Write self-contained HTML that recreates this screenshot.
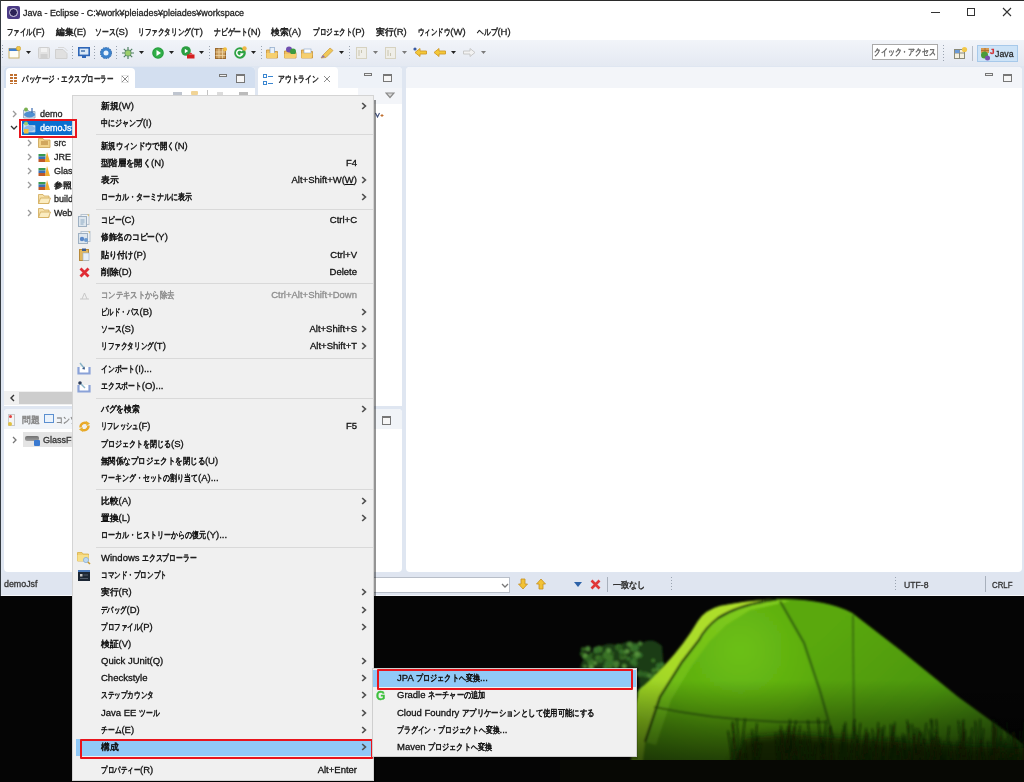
<!DOCTYPE html><html lang="ja"><head><meta charset="utf-8"><title>Eclipse</title><style>
*{margin:0;padding:0;box-sizing:border-box}
html,body{width:1024px;height:782px;overflow:hidden;background:#040404;font-family:"Liberation Sans",sans-serif;font-size:9.5px;color:#1e1e1e;line-height:1}
.a{position:absolute}
.tx{position:absolute;white-space:nowrap;line-height:12px;height:12px;-webkit-text-stroke:0.3px}
.tx b{font-weight:normal;font-size:0.92em;display:inline-block;-webkit-text-stroke:0.5px}
.tx i{font-style:normal;display:inline-block;transform-origin:0 50%}
.sep{position:absolute;left:96px;width:277px;height:1px;background:#d9d9d9}
</style></head><body><div id="root" style="position:absolute;left:0;top:0;width:1024px;height:782px;overflow:hidden;filter:blur(0.5px)">
<svg class="a" style="left:0;top:0" width="1024" height="782" viewBox="0 0 1024 782">
<defs>
<radialGradient id="gBody" cx="740" cy="650" r="150" gradientUnits="userSpaceOnUse">
<stop offset="0" stop-color="#6cc014"/><stop offset="0.5" stop-color="#5cac10"/><stop offset="1" stop-color="#44880c"/>
</radialGradient>
<linearGradient id="gRight" x1="850" y1="610" x2="990" y2="770" gradientUnits="userSpaceOnUse">
<stop offset="0" stop-color="#5aa810"/><stop offset="0.55" stop-color="#4c960c"/><stop offset="1" stop-color="#336c08"/>
</linearGradient>
<linearGradient id="gLeft" x1="740" y1="600" x2="640" y2="760" gradientUnits="userSpaceOnUse">
<stop offset="0" stop-color="#b0e02c"/><stop offset="0.5" stop-color="#a8da28"/><stop offset="1" stop-color="#84c41a"/>
</linearGradient>
<linearGradient id="gStrip" x1="760" y1="600" x2="650" y2="750" gradientUnits="userSpaceOnUse">
<stop offset="0" stop-color="#80cc1c"/><stop offset="1" stop-color="#66b414"/>
</linearGradient>
<linearGradient id="gLow" x1="0" y1="680" x2="0" y2="762" gradientUnits="userSpaceOnUse">
<stop offset="0" stop-color="#000" stop-opacity="0"/><stop offset="0.5" stop-color="#000" stop-opacity="0.32"/><stop offset="1" stop-color="#000" stop-opacity="0.6"/>
</linearGradient>
<filter id="bl" x="-5%" y="-5%" width="110%" height="110%"><feGaussianBlur stdDeviation="0.9"/></filter>
<filter id="bl2" x="-20%" y="-20%" width="140%" height="140%"><feGaussianBlur stdDeviation="1.4"/></filter>
<filter id="bl3" x="-20%" y="-20%" width="140%" height="140%"><feGaussianBlur stdDeviation="4"/></filter>
</defs>
<rect x="0" y="590" width="1024" height="192" fill="#050505"/>
<g filter="url(#bl)">
<path d="M580 668 Q584 652 598 650 Q606 640 618 646 Q628 638 640 644 Q652 636 662 646 L666 695 L640 695 L638 668 Z" fill="#1e4416" opacity="0.85"/>
<circle cx="633.1" cy="661.8" r="3.1" fill="#36702a"/>
<circle cx="635.5" cy="656.7" r="3.1" fill="#3a7228"/>
<circle cx="635.2" cy="665.6" r="2.0" fill="#2a5a1c"/>
<circle cx="653.2" cy="660.6" r="2.0" fill="#3a7228"/>
<circle cx="583.1" cy="649.2" r="2.2" fill="#2a5a1c"/>
<circle cx="595.1" cy="663.1" r="2.0" fill="#54903a"/>
<circle cx="618.5" cy="647.2" r="3.4" fill="#2e6220"/>
<circle cx="599.2" cy="649.2" r="3.4" fill="#3a7228"/>
<circle cx="605.7" cy="667.1" r="2.7" fill="#36702a"/>
<circle cx="633.3" cy="648.4" r="3.3" fill="#3a7228"/>
<circle cx="661.3" cy="688.3" r="2.3" fill="#467e30"/>
<circle cx="616.0" cy="666.5" r="2.2" fill="#467e30"/>
<circle cx="606.7" cy="658.5" r="1.8" fill="#36702a"/>
<circle cx="640.0" cy="643.6" r="2.4" fill="#467e30"/>
<circle cx="621.4" cy="651.6" r="2.6" fill="#36702a"/>
<circle cx="596.4" cy="650.1" r="3.3" fill="#36702a"/>
<circle cx="611.3" cy="653.7" r="2.7" fill="#2a5a1c"/>
<circle cx="612.0" cy="657.9" r="1.8" fill="#2e6220"/>
<circle cx="640.0" cy="673.7" r="3.3" fill="#2e6220"/>
<circle cx="644.0" cy="690.2" r="3.3" fill="#467e30"/>
<circle cx="624.0" cy="665.4" r="2.2" fill="#2a5a1c"/>
<circle cx="590.9" cy="662.0" r="3.1" fill="#467e30"/>
<circle cx="585.0" cy="666.7" r="1.9" fill="#467e30"/>
<circle cx="624.1" cy="652.7" r="2.0" fill="#467e30"/>
<circle cx="657.8" cy="669.4" r="2.3" fill="#467e30"/>
<circle cx="607.1" cy="663.2" r="2.8" fill="#36702a"/>
<circle cx="638.5" cy="693.8" r="2.1" fill="#2e6220"/>
<circle cx="588.6" cy="658.4" r="3.3" fill="#2e6220"/>
<circle cx="601.5" cy="658.3" r="3.1" fill="#2a5a1c"/>
<circle cx="635.4" cy="647.5" r="3.4" fill="#36702a"/>
<circle cx="584.7" cy="655.8" r="3.1" fill="#3a7228"/>
<circle cx="662.5" cy="670.5" r="2.0" fill="#2a5a1c"/>
<circle cx="590.7" cy="654.4" r="2.0" fill="#2a5a1c"/>
<circle cx="606.2" cy="654.9" r="3.4" fill="#3a7228"/>
<circle cx="662.0" cy="664.5" r="2.6" fill="#36702a"/>
<circle cx="608.1" cy="650.6" r="2.6" fill="#3a7228"/>
<circle cx="591.2" cy="663.7" r="2.7" fill="#3a7228"/>
<circle cx="633.4" cy="656.0" r="2.3" fill="#2e6220"/>
<circle cx="622.3" cy="656.4" r="2.7" fill="#54903a"/>
<circle cx="611.6" cy="662.9" r="3.0" fill="#36702a"/>
<circle cx="630.2" cy="644.8" r="2.3" fill="#54903a"/>
<circle cx="639.8" cy="655.2" r="2.6" fill="#36702a"/>
<circle cx="640.7" cy="691.7" r="2.3" fill="#3a7228"/>
<circle cx="629.6" cy="644.3" r="2.7" fill="#467e30"/>
<circle cx="608.7" cy="650.6" r="2.3" fill="#54903a"/>
<circle cx="635.1" cy="663.1" r="2.4" fill="#36702a"/>
<circle cx="610.3" cy="666.5" r="2.5" fill="#3a7228"/>
<circle cx="653.3" cy="677.2" r="3.4" fill="#467e30"/>
<circle cx="624.5" cy="656.7" r="2.1" fill="#467e30"/>
<circle cx="658.9" cy="665.8" r="2.9" fill="#36702a"/>
<circle cx="637.0" cy="654.0" r="2.8" fill="#54903a"/>
<circle cx="624.3" cy="666.5" r="2.3" fill="#54903a"/>
<circle cx="645.5" cy="674.4" r="3.0" fill="#2e6220"/>
<circle cx="598.0" cy="658.1" r="2.8" fill="#3a7228"/>
<circle cx="600.0" cy="660.5" r="2.8" fill="#2e6220"/>
<circle cx="662.9" cy="692.9" r="2.1" fill="#3a7228"/>
<circle cx="591.1" cy="667.2" r="2.6" fill="#54903a"/>
<circle cx="584.9" cy="655.2" r="2.4" fill="#54903a"/>
<circle cx="587.9" cy="648.9" r="2.9" fill="#467e30"/>
<circle cx="582.1" cy="653.7" r="2.2" fill="#2a5a1c"/>
<circle cx="653.0" cy="677.2" r="2.7" fill="#2e6220"/>
<circle cx="627.1" cy="651.2" r="2.3" fill="#54903a"/>
<circle cx="609.8" cy="657.9" r="3.3" fill="#3a7228"/>
<circle cx="616.4" cy="663.5" r="2.8" fill="#467e30"/>
<circle cx="620.3" cy="647.8" r="2.4" fill="#2a5a1c"/>
<circle cx="660.5" cy="692.3" r="2.8" fill="#467e30"/>
<circle cx="649.3" cy="675.7" r="2.4" fill="#467e30"/>
<circle cx="628.4" cy="658.8" r="2.0" fill="#36702a"/>
<circle cx="653.9" cy="670.5" r="2.5" fill="#3a7228"/>
<circle cx="622.5" cy="655.5" r="2.9" fill="#2a5a1c"/>
</g>
<path d="M686 597 L686 640" stroke="#1e1410" stroke-width="3" filter="url(#bl2)"/>
<g filter="url(#bl)">
<path d="M630 775 L634 712 L639 690 Q652 679 664 666 Q684 645 698 621 Q705 610 720 606 Q750 600 785 599 Q828 600 852 613 L900 650 L958 697 L1024 745 L1024 775 Z" fill="url(#gBody)"/>
<path d="M834 740 L820 691 L804 643 L780 599.5 Q828 600 852 613 L900 650 L958 697 L1024 745 L1024 772 L836 768 Z" fill="url(#gRight)"/>
<path d="M656 745 L671 700 L692 665 L709 642 L726 625 L750 610 L790 601 L777 599.5 Q740 604 718 618 Q705 628 699 640 L682 662 L660 697 L645 742 Z" fill="url(#gStrip)"/>
<path d="M630 775 L634 712 L639 690 Q652 679 664 666 Q684 645 698 621 Q705 610 720 606 Q750 600 777 599.5 Q740 604 718 618 Q705 628 699 640 L682 662 L660 697 L645 742 L641 775 Z" fill="url(#gLeft)"/>
<path d="M777 599.5 Q740 604 718 618 Q705 628 699 640 L682 662 L660 697 L645 742" stroke="#10240a" stroke-width="2.2" fill="none"/>
<path d="M780 601 L804 643 L820 691 L834 740" stroke="#2c540a" stroke-width="2" fill="none"/>
<path d="M853 615 L854 740" stroke="#2e5a0a" stroke-width="1.4" fill="none"/>
<path d="M654 707 Q735 724 826 722" stroke="#2c520a" stroke-width="1.5" fill="none"/>
</g>
<rect x="600" y="680" width="424" height="100" fill="url(#gLow)"/>
<g filter="url(#bl3)" fill="#0a1404" opacity="0.8">
<path d="M730 770 L745 738 L790 734 L840 738 L900 742 L960 746 L1024 748 L1024 782 L730 782 Z"/>
</g>
<g stroke="#0a1404" stroke-width="1.3" fill="none" filter="url(#bl)" opacity="0.75"><path d="M861.9 762 Q864.0 744.9 866.1 729.9 M865.8 762 Q866.3 745.6 866.7 731.3 M782.7 762 Q783.3 745.6 784.0 731.2 M962.7 762 Q961.7 751.2 960.8 742.5 M754.8 762 Q755.8 741.6 756.8 723.1 M740.4 762 Q742.7 739.2 745.0 718.5 M921.6 762 Q919.8 744.2 918.1 728.4 M732.4 762 Q730.2 745.4 728.0 730.7 M784.3 762 Q782.0 749.2 779.6 738.5 M865.3 762 Q867.0 746.6 868.7 733.1 M881.7 762 Q881.7 743.9 881.7 727.7 M924.1 762 Q923.0 746.3 921.9 732.7 M1023.3 762 Q1025.0 739.1 1026.7 718.1 M937.5 762 Q936.2 748.2 934.8 736.5 M813.6 762 Q814.9 751.6 816.2 743.1 M846.5 762 Q846.0 741.1 845.4 722.1 M1011.6 762 Q1009.1 741.1 1006.6 722.1 M790.1 762 Q789.9 740.2 789.8 720.4 M1018.2 762 Q1016.1 747.1 1013.9 734.3 M914.3 762 Q913.2 742.0 912.0 724.0 M753.8 762 Q756.1 748.0 758.4 736.0 M952.4 762 Q951.1 750.9 949.8 741.8 M757.9 762 Q759.4 751.7 760.9 743.4 M780.6 762 Q780.3 744.9 780.1 729.9 M784.4 762 Q782.6 742.6 780.8 725.2 M918.5 762 Q918.1 750.9 917.7 741.9 M791.0 762 Q793.4 748.9 795.7 737.7 M965.8 762 Q967.7 748.4 969.7 736.8 M790.4 762 Q792.1 747.2 793.9 734.4 M918.0 762 Q920.4 751.1 922.9 742.3 M791.1 762 Q792.5 749.0 793.8 738.0 M825.4 762 Q823.2 748.5 821.1 737.0 M754.7 762 Q753.4 744.6 752.1 729.3 M906.0 762 Q905.7 747.5 905.5 735.0 M1011.9 762 Q1012.3 746.0 1012.6 731.9 M984.5 762 Q982.8 750.0 981.0 740.1 M996.9 762 Q995.6 741.5 994.4 722.9 M784.2 762 Q786.4 742.5 788.6 725.0 M786.2 762 Q788.1 739.7 790.0 719.3 M906.6 762 Q904.7 746.8 902.7 733.6 M739.5 762 Q738.1 739.5 736.8 719.0 M936.6 762 Q938.2 749.0 939.8 738.1 M904.6 762 Q902.9 748.5 901.3 737.1 M941.2 762 Q939.9 751.6 938.5 743.1 M893.6 762 Q894.1 741.0 894.7 722.0 M810.9 762 Q809.5 740.1 808.0 720.2 M732.9 762 Q732.6 748.9 732.4 737.7 M745.9 762 Q745.2 750.1 744.6 740.2 M897.4 762 Q896.7 750.7 896.0 741.4 M991.7 762 Q992.5 739.3 993.3 718.5 M932.6 762 Q930.8 744.6 929.0 729.2 M738.4 762 Q740.4 752.3 742.5 744.5 M935.5 762 Q933.1 739.5 930.7 719.0 M916.3 762 Q917.5 746.0 918.6 732.0 M822.4 762 Q820.3 739.0 818.1 718.0 M889.6 762 Q891.6 742.6 893.6 725.1 M946.2 762 Q947.6 743.0 949.1 726.0 M998.8 762 Q999.8 747.8 1000.7 735.5 M994.6 762 Q994.2 740.7 993.8 721.5 M962.0 762 Q962.4 740.8 962.7 721.7 M913.0 762 Q913.4 747.3 913.8 734.7 M908.2 762 Q908.9 751.4 909.6 742.8 M1022.0 762 Q1023.2 740.6 1024.3 721.2 M843.0 762 Q843.4 742.6 843.8 725.2 M858.4 762 Q856.3 741.2 854.2 722.4 M950.1 762 Q950.6 752.1 951.1 744.2 M870.4 762 Q871.4 749.4 872.3 738.8 M875.2 762 Q877.3 744.2 879.4 728.4 M803.7 762 Q802.7 752.3 801.7 744.7 M928.7 762 Q927.1 749.8 925.4 739.5 M996.1 762 Q995.8 743.6 995.5 727.2 M992.0 762 Q992.8 748.1 993.6 736.2 M786.8 762 Q788.3 746.7 789.8 733.4 M998.6 762 Q998.0 740.6 997.5 721.2 M900.6 762 Q898.8 748.2 897.0 736.5 M875.0 762 Q876.7 741.2 878.4 722.4 M938.5 762 Q937.4 739.7 936.3 719.3 M778.1 762 Q776.9 746.4 775.8 732.8 M791.4 762 Q792.0 746.9 792.6 733.8 M874.2 762 Q875.9 748.2 877.6 736.5 M1018.7 762 Q1016.6 746.4 1014.4 732.8 M737.3 762 Q735.0 740.7 732.7 721.4 M937.8 762 Q936.8 744.8 935.8 729.6 M962.3 762 Q960.5 752.2 958.6 744.5 M862.6 762 Q864.3 752.2 865.9 744.3 M798.3 762 Q796.0 750.6 793.7 741.2 M914.2 762 Q914.9 746.5 915.5 732.9 M921.9 762 Q924.2 741.6 926.5 723.2 M930.6 762 Q930.5 749.8 930.4 739.6 M780.9 762 Q780.8 752.4 780.6 744.7 M939.4 762 Q938.3 750.1 937.1 740.2 M830.3 762 Q830.4 743.1 830.5 726.2 M909.9 762 Q909.3 742.3 908.8 724.6 M962.4 762 Q960.3 740.3 958.3 720.5 M1004.1 762 Q1002.2 742.7 1000.3 725.5 M862.2 762 Q864.3 744.1 866.3 728.1 M839.5 762 Q841.4 744.8 843.3 729.6 M963.8 762 Q963.7 739.8 963.5 719.5 M920.8 762 Q921.9 749.7 923.0 739.5 M970.2 762 Q971.3 743.8 972.4 727.7 M791.1 762 Q793.5 740.4 795.9 720.7 M1017.3 762 Q1018.8 745.3 1020.2 730.5 M822.8 762 Q824.6 740.2 826.4 720.4 M831.2 762 Q830.9 751.4 830.6 742.8 M890.9 762 Q890.8 742.1 890.8 724.3 M736.4 762 Q734.2 741.6 732.1 723.2 M964.8 762 Q963.9 750.2 963.1 740.3 M961.2 762 Q959.5 750.6 957.7 741.2 M880.9 762 Q882.6 742.7 884.3 725.5 M932.1 762 Q932.0 739.7 932.0 719.5 M1008.9 762 Q1007.6 751.3 1006.2 742.7 M883.9 762 Q885.0 748.6 886.2 737.2 M917.1 762 Q918.8 745.4 920.5 730.9 M893.8 762 Q893.2 748.3 892.6 736.6 M978.2 762 Q976.7 740.3 975.3 720.7 M979.8 762 Q979.9 739.4 980.1 718.9 M897.6 762 Q897.8 749.8 898.0 739.6 M876.9 762 Q874.6 744.3 872.2 728.7 M1014.9 762 Q1014.4 745.5 1013.9 731.1 M965.1 762 Q965.1 744.9 965.0 729.8 M932.5 762 Q932.7 751.6 932.9 743.2 M850.5 762 Q852.6 739.6 854.7 719.2 M807.7 762 Q805.8 746.1 804.0 732.2 M856.4 762 Q858.4 741.5 860.4 723.0 M869.1 762 Q867.5 748.2 866.0 736.4 M910.9 762 Q909.0 740.0 907.2 720.0 M958.7 762 Q957.1 752.2 955.6 744.4 M795.3 762 Q794.4 743.2 793.5 726.5 M833.2 762 Q831.2 744.1 829.2 728.3 M944.3 762 Q944.4 750.8 944.4 741.7 M802.2 762 Q802.3 749.8 802.5 739.7 M857.3 762 Q856.9 747.4 856.4 734.9 M884.7 762 Q883.2 750.3 881.7 740.7 M914.9 762 Q915.0 743.9 915.2 727.8 M980.0 762 Q981.8 744.2 983.5 728.5 M796.9 762 Q798.4 742.5 800.0 725.0 M995.2 762 Q994.3 748.2 993.3 736.5 M1001.1 762 Q1003.6 749.6 1006.1 739.1 M990.7 762 Q989.4 750.7 988.1 741.4 M943.1 762 Q941.1 749.0 939.0 738.0"/></g>
<rect x="560" y="760" width="464" height="22" fill="#070804"/>
</svg>

<div class="a" style="left:0px;top:0px;width:1024px;height:596px;background:#dfe6f1"></div>
<div class="a" style="left:0px;top:0px;width:1024px;height:40px;background:#fff"></div>
<div class="a" style="left:0px;top:0px;width:1024px;height:1px;background:#2b2b2b"></div>
<div class="a" style="left:0px;top:0px;width:1.2px;height:596px;background:#343a40"></div>
<div class="a" style="left:1px;top:40px;width:1023px;height:26px;background:linear-gradient(#f1f4f9,#e4e9f2)"></div>
<div class="a" style="left:7px;top:6px;width:13px;height:13px;background:#4b3b86;border-radius:2px"></div>
<div class="a" style="left:9px;top:8px;width:9px;height:9px;border-radius:50%;background:#2c2358;border:1.5px solid #d9d4ea"></div>
<div class="tx" style="left:23px;top:7.00px;color:#222;font-size:9.5px;transform:scaleX(0.943);transform-origin:0 50%;">Java - Eclipse - C:¥work¥pleiades¥pleiades¥workspace</div>
<div class="a" style="left:931px;top:12px;width:9px;height:1px;background:#333"></div>
<div class="a" style="left:967px;top:8px;width:8px;height:8px;border:1px solid #333"></div>
<svg class="a" style="left:1002px;top:7px" width="10" height="10"><path d="M1 1L9 9M9 1L1 9" stroke="#333" stroke-width="1.1"/></svg>
<div class="tx" style="left:7px;top:26.00px;color:#222;font-size:9.5px;"><b style="width:25.50px"><i style="transform:scaleX(0.708)">ファイル</i></b>(F)</div>
<div class="tx" style="left:56px;top:26.00px;color:#222;font-size:9.5px;"><b style="width:17.60px"><i style="transform:scaleX(0.978)">編集</i></b>(E)</div>
<div class="tx" style="left:95px;top:26.00px;color:#222;font-size:9.5px;"><b style="width:20.40px"><i style="transform:scaleX(0.756)">ソース</i></b>(S)</div>
<div class="tx" style="left:138px;top:26.00px;color:#222;font-size:9.5px;"><b style="width:52.70px"><i style="transform:scaleX(0.732)">リファクタリング</i></b>(T)</div>
<div class="tx" style="left:213.5px;top:26.00px;color:#222;font-size:9.5px;"><b style="width:34.00px"><i style="transform:scaleX(0.756)">ナビゲート</i></b>(N)</div>
<div class="tx" style="left:271px;top:26.00px;color:#222;font-size:9.5px;"><b style="width:17.60px"><i style="transform:scaleX(0.978)">検索</i></b>(A)</div>
<div class="tx" style="left:313px;top:26.00px;color:#222;font-size:9.5px;"><b style="width:39.10px"><i style="transform:scaleX(0.724)">プロジェクト</i></b>(P)</div>
<div class="tx" style="left:376px;top:26.00px;color:#222;font-size:9.5px;"><b style="width:17.60px"><i style="transform:scaleX(0.978)">実行</i></b>(R)</div>
<div class="tx" style="left:418px;top:26.00px;color:#222;font-size:9.5px;"><b style="width:32.30px"><i style="transform:scaleX(0.718)">ウィンドウ</i></b>(W)</div>
<div class="tx" style="left:477px;top:26.00px;color:#222;font-size:9.5px;"><b style="width:20.40px"><i style="transform:scaleX(0.756)">ヘルプ</i></b>(H)</div>
<div class="a" style="left:2px;top:45px;width:1px;height:15px;background:repeating-linear-gradient(#9aa3b0 0 1px,transparent 1px 3px)"></div>
<svg class="a" style="left:8px;top:46px" width="13" height="13" viewBox="0 0 13 13"><rect x="1" y="2.5" width="10" height="9.5" fill="#fdfdf6" stroke="#c8b06a" stroke-width="1"/><rect x="1" y="2.5" width="10" height="2.5" fill="#3f7fd0"/><circle cx="10.5" cy="2.5" r="2.2" fill="#f4c848" stroke="#c89a30" stroke-width="0.6"/></svg>
<svg class="a" style="left:26.0px;top:51px" width="5" height="3" viewBox="0 0 5 3"><path d="M0 0H5L2.5 3Z" fill="#222"/></svg>
<svg class="a" style="left:38px;top:47px" width="12" height="12" viewBox="0 0 12 12"><rect x="0.5" y="0.5" width="11" height="11" rx="1" fill="#e2e2e2" stroke="#cfcfcf"/><rect x="3" y="1" width="6" height="4" fill="#f2f2f2"/><rect x="2.5" y="7" width="7" height="4" fill="#d0d0d0"/></svg>
<svg class="a" style="left:55px;top:47px" width="13" height="12" viewBox="0 0 13 12"><path d="M0.5 2.5H8L12 6.5V11.5H0.5Z" fill="#e0e0e0" stroke="#d0d0d0"/><path d="M3 0.5H9L12.5 4" fill="none" stroke="#d8d8d8"/></svg>
<div class="a" style="left:72px;top:46px;width:1px;height:14px;background:repeating-linear-gradient(#9aa3b0 0 1px,transparent 1px 3px)"></div>
<svg class="a" style="left:78px;top:47px" width="12" height="11" viewBox="0 0 12 11"><rect x="0.8" y="0.8" width="10.4" height="7.6" fill="#dbe8f6" stroke="#2e66b8" stroke-width="1.6"/><rect x="3" y="3" width="4" height="2" fill="#6a90c0"/><rect x="4" y="9" width="4" height="2" fill="#2e66b8"/></svg>
<div class="a" style="left:94px;top:46px;width:1px;height:14px;background:repeating-linear-gradient(#9aa3b0 0 1px,transparent 1px 3px)"></div>
<svg class="a" style="left:100px;top:47px" width="12" height="12" viewBox="0 0 12 12"><circle cx="6" cy="6" r="5.5" fill="#3b82cc"/><circle cx="6" cy="6" r="5.6" fill="none" stroke="#2a64a8" stroke-width="1" stroke-dasharray="1.5 1"/><circle cx="6" cy="6" r="2.5" fill="#e8f2fc"/></svg>
<div class="a" style="left:116px;top:46px;width:1px;height:14px;background:repeating-linear-gradient(#9aa3b0 0 1px,transparent 1px 3px)"></div>
<svg class="a" style="left:122px;top:47px" width="12" height="12" viewBox="0 0 12 12"><circle cx="6" cy="6" r="3.5" fill="#7aa87a"/><path d="M6 0V12M0 6H12M1.8 1.8L10.2 10.2M10.2 1.8L1.8 10.2" stroke="#4f8060" stroke-width="1.2"/><circle cx="6" cy="6" r="2.6" fill="#9ccf6a"/></svg>
<svg class="a" style="left:139.0px;top:51px" width="5" height="3" viewBox="0 0 5 3"><path d="M0 0H5L2.5 3Z" fill="#222"/></svg>
<svg class="a" style="left:152px;top:47px" width="12" height="12" viewBox="0 0 12 12"><circle cx="6" cy="6" r="5.8" fill="#239a3a"/><circle cx="6" cy="6" r="4.8" fill="#30ae48"/><path d="M4.5 3L9 6L4.5 9Z" fill="#fff"/></svg>
<svg class="a" style="left:169.0px;top:51px" width="5" height="3" viewBox="0 0 5 3"><path d="M0 0H5L2.5 3Z" fill="#222"/></svg>
<svg class="a" style="left:181px;top:46px" width="14" height="13" viewBox="0 0 14 13"><circle cx="5" cy="5" r="4.8" fill="#2a9e40"/><path d="M3.8 2.8L7.2 5L3.8 7.2Z" fill="#fff"/><path d="M6 8.5H13.5V12.5H6Z" fill="#d42020"/><path d="M7.5 8.5L9.8 6.5L12 8.5" fill="#e03030"/></svg>
<svg class="a" style="left:199.0px;top:51px" width="5" height="3" viewBox="0 0 5 3"><path d="M0 0H5L2.5 3Z" fill="#222"/></svg>
<div class="a" style="left:209px;top:46px;width:1px;height:14px;background:repeating-linear-gradient(#9aa3b0 0 1px,transparent 1px 3px)"></div>
<svg class="a" style="left:215px;top:47px" width="12" height="12" viewBox="0 0 12 12"><rect x="0.5" y="1.5" width="10" height="10" fill="#c89a5a" stroke="#9a6a30"/><path d="M0.5 5H10.5M0.5 8.5H10.5M4 1.5V11.5M7.5 1.5V11.5" stroke="#f0d8a8" stroke-width="0.8"/><circle cx="10" cy="2.2" r="2" fill="#f2c040"/></svg>
<svg class="a" style="left:234px;top:46px" width="13" height="13" viewBox="0 0 13 13"><circle cx="6" cy="7" r="5.8" fill="#2ea244"/><path d="M8.2 5.2A3 3 0 1 0 8.5 8H6.3" stroke="#fff" stroke-width="1.5" fill="none"/><circle cx="10.5" cy="2.5" r="2.2" fill="#f0b848"/></svg>
<svg class="a" style="left:251.0px;top:51px" width="5" height="3" viewBox="0 0 5 3"><path d="M0 0H5L2.5 3Z" fill="#222"/></svg>
<div class="a" style="left:261px;top:46px;width:1px;height:14px;background:repeating-linear-gradient(#9aa3b0 0 1px,transparent 1px 3px)"></div>
<svg class="a" style="left:266px;top:47px" width="12" height="12" viewBox="0 0 12 12"><path d="M0.5 3H4.5L5.5 4.5H11.5V11H0.5Z" fill="#f0c060" stroke="#c89030" stroke-width="0.8"/><rect x="4" y="0.5" width="4.5" height="6" fill="#e8f0fa" stroke="#7a9ac0" stroke-width="0.6"/><path d="M0.5 6H11.5L10.5 11H0.5Z" fill="#f6cf6e"/></svg>
<svg class="a" style="left:284px;top:46px" width="13" height="13" viewBox="0 0 13 13"><path d="M0.5 5H4.5L5.5 6.5H12V12H0.5Z" fill="#f0c060" stroke="#c89030" stroke-width="0.8"/><circle cx="5" cy="3.5" r="3" fill="#7050b0"/><circle cx="9" cy="5.5" r="3" fill="#3a9a40"/><path d="M0.5 8H12.5L11.5 12H0.5Z" fill="#f6cf6e"/></svg>
<svg class="a" style="left:301px;top:47px" width="12" height="12" viewBox="0 0 12 12"><path d="M0.5 3H4.5L5.5 4.5H11.5V11H0.5Z" fill="#f0c060" stroke="#c89030" stroke-width="0.8"/><rect x="3" y="2" width="7" height="4" fill="#fff" stroke="#8aa6c8" stroke-width="0.6"/><path d="M0.5 6.5H11.5L10.5 11H0.5Z" fill="#f6cf6e"/></svg>
<svg class="a" style="left:320px;top:47px" width="14" height="12" viewBox="0 0 14 12"><path d="M1 11L3 8L10 1L13 3.5L6 10.5Z" fill="#f0c858" stroke="#c89a40" stroke-width="0.7"/><path d="M1 11L3 8L5 10Z" fill="#8a70b0"/></svg>
<svg class="a" style="left:339.0px;top:51px" width="5" height="3" viewBox="0 0 5 3"><path d="M0 0H5L2.5 3Z" fill="#222"/></svg>
<div class="a" style="left:349px;top:46px;width:1px;height:14px;background:repeating-linear-gradient(#9aa3b0 0 1px,transparent 1px 3px)"></div>
<svg class="a" style="left:356px;top:47px" width="11" height="12" viewBox="0 0 11 12"><rect x="0.5" y="0.5" width="10" height="11" fill="#efeee8" stroke="#d6d2c0"/><path d="M3 3V9M5.5 3V6" stroke="#c8c4b0" stroke-width="1"/></svg>
<svg class="a" style="left:373.0px;top:51px" width="5" height="3" viewBox="0 0 5 3"><path d="M0 0H5L2.5 3Z" fill="#7a7a7a"/></svg>
<svg class="a" style="left:385px;top:47px" width="11" height="12" viewBox="0 0 11 12"><rect x="0.5" y="0.5" width="10" height="11" fill="#efeee8" stroke="#d6d2c0"/><path d="M3 3V9M5.5 6V9" stroke="#c8c4b0" stroke-width="1"/></svg>
<svg class="a" style="left:402.0px;top:51px" width="5" height="3" viewBox="0 0 5 3"><path d="M0 0H5L2.5 3Z" fill="#7a7a7a"/></svg>
<svg class="a" style="left:413px;top:47px" width="15" height="11" viewBox="0 0 15 11"><path d="M2 5.5L7 1.5V4H13.5V7H7V9.5Z" fill="#f4c838" stroke="#d09a28" stroke-width="0.9"/><circle cx="2" cy="2" r="1.6" fill="#3a5aa0"/></svg>
<svg class="a" style="left:433px;top:47px" width="13" height="11" viewBox="0 0 13 11"><path d="M1 5.5L6 1.5V4H12.5V7H6V9.5Z" fill="#f4c838" stroke="#d09a28" stroke-width="0.9"/></svg>
<svg class="a" style="left:451.0px;top:51px" width="5" height="3" viewBox="0 0 5 3"><path d="M0 0H5L2.5 3Z" fill="#222"/></svg>
<svg class="a" style="left:463px;top:47px" width="13" height="11" viewBox="0 0 13 11"><path d="M12 5.5L7 1.5V4H0.5V7H7V9.5Z" fill="#f2f2f2" stroke="#c4c4c4" stroke-width="0.9"/></svg>
<svg class="a" style="left:481.0px;top:51px" width="5" height="3" viewBox="0 0 5 3"><path d="M0 0H5L2.5 3Z" fill="#7a7a7a"/></svg>
<div class="a" style="left:872px;top:44px;width:66px;height:16px;background:#fff;border:1px solid #a9a9a9"></div>
<div class="tx" style="left:874px;top:46.00px;color:#6a6a6a;font-size:9.5px;"><b style="width:61.78px"><i style="transform:scaleX(0.763)">クイック・アクセス</i></b></div>
<div class="a" style="left:943px;top:45px;width:1px;height:16px;background:repeating-linear-gradient(#9aa3b0 0 1px,transparent 1px 3px)"></div>
<svg class="a" style="left:954px;top:46px" width="14" height="14" viewBox="0 0 14 14"><rect x="0.5" y="3.5" width="10" height="9" fill="#f4f0e0" stroke="#8a8a78"/><path d="M0.5 7H10.5M5.5 3.5V12.5" stroke="#8a8a78"/><rect x="1" y="4" width="4.5" height="3" fill="#6a9ad8"/><circle cx="10.5" cy="3.5" r="2.6" fill="#f2c84a"/></svg>
<div class="a" style="left:972px;top:46px;width:1px;height:15px;background:#b8bec8"></div>
<div class="a" style="left:977px;top:45px;width:41px;height:17px;background:#cde3f7;border:1px solid #a7c9ea"></div>
<svg class="a" style="left:980px;top:47px" width="14" height="14" viewBox="0 0 14 14"><rect x="1" y="1" width="8" height="5" fill="#d89a50"/><path d="M1 3.5H9M5 1V6" stroke="#a86a28" stroke-width="0.8"/><circle cx="4.5" cy="8" r="3.5" fill="#4a9a3a"/><circle cx="7.5" cy="11" r="2.5" fill="#7a4fb0"/></svg>
<div class="tx" style="left:990px;top:46.00px;color:#d02828;font-size:8px;font-weight:bold;">J</div>
<div class="tx" style="left:995px;top:48.00px;color:#2a2a2a;font-size:9px;transform:scaleX(0.973);transform-origin:0 50%;">Java</div>
<div class="a" style="left:4px;top:67px;width:251px;height:339px;background:#fff;border-radius:4px 4px 0 0"></div>
<div class="a" style="left:4px;top:67px;width:251px;height:21px;background:#d3dff0;border-radius:4px 4px 0 0"></div>
<div class="a" style="left:6px;top:68px;width:129px;height:20px;background:#fff;border-radius:4px 4px 0 0"></div>
<div class="a" style="left:10px;top:74px;width:3px;height:10px;background:repeating-linear-gradient(#c07030 0 2px,transparent 2px 3px)"></div>
<div class="a" style="left:14px;top:74px;width:3px;height:10px;background:repeating-linear-gradient(#c07030 0 2px,transparent 2px 3px)"></div>
<div class="tx" style="left:22px;top:73.00px;color:#222;font-size:9.5px;"><b style="width:91.20px"><i style="transform:scaleX(0.724)">パッケージ・エクスプローラー</i></b></div>
<svg class="a" style="left:121px;top:75px" width="8" height="8"><path d="M1 1L7 7M7 1L1 7" stroke="#8a8a8a" stroke-width="1"/><rect x="0.5" y="0.5" width="7" height="7" fill="none" stroke="#aaa" stroke-width="0.6" stroke-dasharray="1 1"/></svg>
<div class="a" style="left:219px;top:74px;width:8px;height:3px;border:1px solid #777;background:#eee"></div>
<div class="a" style="left:235.5px;top:74px;width:9px;height:8.5px;border:1px solid #777;border-top:2px solid #777;background:#f6f6f6"></div>
<svg class="a" style="left:12px;top:110px" width="6" height="8"><path d="M1 1L4 4L1 7" stroke="#999" stroke-width="1.3" fill="none"/></svg>
<svg class="a" style="left:23px;top:107px" width="13" height="12" viewBox="0 0 13 12"><path d="M0.5 3H5L6 4.5H12V11H0.5Z" fill="#dfe6ee" stroke="#8aa0b8" stroke-width="0.8"/><ellipse cx="6.5" cy="7.5" rx="5.5" ry="3" fill="#4f8fd0"/><circle cx="3" cy="2.5" r="2" fill="#7ab050"/><path d="M9 1V6" stroke="#3a6ab0" stroke-width="1.2"/></svg>
<div class="tx" style="left:40px;top:108.00px;color:#222;font-size:9px;">demo</div>
<svg class="a" style="left:10px;top:125px" width="8" height="6"><path d="M1 1L4 4L7 1" stroke="#333" stroke-width="1.3" fill="none"/></svg>
<div class="a" style="left:22px;top:121px;width:51px;height:14px;background:#0a6fd0"></div>
<svg class="a" style="left:23px;top:121px" width="13" height="13" viewBox="0 0 13 13"><path d="M0.5 3H5L6 4.5H12V11H0.5Z" fill="#cfe0f2" stroke="#a8c4e0" stroke-width="0.8"/><ellipse cx="6.5" cy="7.5" rx="5.5" ry="3" fill="#8ab8e8"/><circle cx="3" cy="2.5" r="2" fill="#9ad070"/><rect x="1" y="8" width="4.5" height="4.5" fill="#f0c040"/></svg>
<div class="tx" style="left:40px;top:122.00px;color:#fff;font-size:9px;">demoJsf</div>
<svg class="a" style="left:27px;top:139px" width="6" height="8"><path d="M1 1L4 4L1 7" stroke="#999" stroke-width="1.3" fill="none"/></svg>
<svg class="a" style="left:38px;top:137px" width="13" height="11" viewBox="0 0 13 11"><path d="M0.5 1.5H5L6 3H12V10.5H0.5Z" fill="#f2d38a" stroke="#c8a050" stroke-width="0.8"/><path d="M3 5H10M3 7H10" stroke="#b07a30" stroke-width="1"/></svg>
<div class="tx" style="left:54px;top:137.00px;color:#222;font-size:9px;">src</div>
<svg class="a" style="left:27px;top:153px" width="6" height="8"><path d="M1 1L4 4L1 7" stroke="#999" stroke-width="1.3" fill="none"/></svg>
<svg class="a" style="left:38px;top:151px" width="13" height="12" viewBox="0 0 13 12"><rect x="0.5" y="3" width="7" height="2.5" fill="#3a9a50"/><rect x="0.5" y="5.5" width="7" height="2.5" fill="#3a70b8"/><rect x="0.5" y="8" width="7" height="3" fill="#c05a28"/><path d="M7 11L9 1L12 11Z" fill="#f0b030"/></svg>
<div class="tx" style="left:54px;top:151.00px;color:#222;font-size:9px;">JRE <b style="width:6.80px"><i style="transform:scaleX(0.850)">シ</i></b></div>
<svg class="a" style="left:27px;top:167px" width="6" height="8"><path d="M1 1L4 4L1 7" stroke="#999" stroke-width="1.3" fill="none"/></svg>
<svg class="a" style="left:38px;top:165px" width="13" height="12" viewBox="0 0 13 12"><rect x="0.5" y="3" width="7" height="2.5" fill="#3a9a50"/><rect x="0.5" y="5.5" width="7" height="2.5" fill="#3a70b8"/><rect x="0.5" y="8" width="7" height="3" fill="#c05a28"/><path d="M7 11L9 1L12 11Z" fill="#f0b030"/></svg>
<div class="tx" style="left:54px;top:165.00px;color:#222;font-size:9px;">GlassFish</div>
<svg class="a" style="left:27px;top:181px" width="6" height="8"><path d="M1 1L4 4L1 7" stroke="#999" stroke-width="1.3" fill="none"/></svg>
<svg class="a" style="left:38px;top:179px" width="13" height="12" viewBox="0 0 13 12"><rect x="0.5" y="3" width="7" height="2.5" fill="#3a9a50"/><rect x="0.5" y="5.5" width="7" height="2.5" fill="#3a70b8"/><rect x="0.5" y="8" width="7" height="3" fill="#c05a28"/><path d="M7 11L9 1L12 11Z" fill="#f0b030"/></svg>
<div class="tx" style="left:54px;top:179.00px;color:#222;font-size:9px;"><b style="width:17.60px"><i style="transform:scaleX(1.100)">参照</i></b></div>
<svg class="a" style="left:38px;top:193px" width="13" height="11" viewBox="0 0 13 11"><path d="M0.5 1.5H5L6 3H11V10.5H0.5Z" fill="#f6e0a8" stroke="#d0aa58" stroke-width="0.8"/><path d="M2.5 5H12.5L10.5 10.5H0.5Z" fill="#fbecc0" stroke="#d0aa58" stroke-width="0.8"/></svg>
<div class="tx" style="left:54px;top:193.00px;color:#222;font-size:9px;">build</div>
<svg class="a" style="left:27px;top:209px" width="6" height="8"><path d="M1 1L4 4L1 7" stroke="#999" stroke-width="1.3" fill="none"/></svg>
<svg class="a" style="left:38px;top:207px" width="13" height="11" viewBox="0 0 13 11"><path d="M0.5 1.5H5L6 3H11V10.5H0.5Z" fill="#f6e0a8" stroke="#d0aa58" stroke-width="0.8"/><path d="M2.5 5H12.5L10.5 10.5H0.5Z" fill="#fbecc0" stroke="#d0aa58" stroke-width="0.8"/></svg>
<div class="tx" style="left:54px;top:207.00px;color:#222;font-size:9px;">WebContent</div>
<div class="a" style="left:173px;top:92px;width:9px;height:3px;background:#8a96a8;opacity:.55"></div>
<div class="a" style="left:191px;top:91px;width:7px;height:4px;background:#e8b850;border-radius:1px;opacity:.6"></div>
<div class="a" style="left:207px;top:90px;width:1px;height:5px;background:#888;opacity:.5"></div>
<div class="a" style="left:217px;top:92px;width:6px;height:3px;background:#b8b8b8;opacity:.5"></div>
<div class="a" style="left:239px;top:92px;width:9px;height:3px;background:#777;opacity:.5"></div>
<div class="a" style="left:4px;top:391px;width:251px;height:14px;background:#f0f0f0"></div>
<div class="a" style="left:19px;top:392px;width:236px;height:12px;background:#cdcdcd"></div>
<svg class="a" style="left:9px;top:394px" width="6" height="8"><path d="M5 1L2 4L5 7" stroke="#333" stroke-width="1.4" fill="none"/></svg>
<div class="a" style="left:258px;top:67px;width:144px;height:339px;background:#fff;border-radius:4px 4px 0 0"></div>
<div class="a" style="left:258px;top:67px;width:144px;height:21px;background:#eef2f8;border-radius:4px 4px 0 0"></div>
<div class="a" style="left:258px;top:67px;width:80px;height:21px;background:#fff;border-radius:4px 4px 0 0"></div>
<div class="a" style="left:358px;top:88px;width:44px;height:16px;background:#f3f5f9"></div>
<div class="a" style="left:263px;top:74px;width:4px;height:4px;border:1.2px solid #3b86d0"></div>
<div class="a" style="left:263px;top:81px;width:4px;height:4px;border:1.2px solid #3b86d0"></div>
<div class="a" style="left:268px;top:76px;width:5px;height:1px;background:#3b86d0"></div>
<div class="a" style="left:268px;top:83px;width:5px;height:1px;background:#3b86d0"></div>
<div class="tx" style="left:278px;top:73.00px;color:#222;font-size:9.5px;"><b style="width:40.80px"><i style="transform:scaleX(0.756)">アウトライン</i></b></div>
<svg class="a" style="left:323px;top:75px" width="8" height="8"><path d="M1 1L7 7M7 1L1 7" stroke="#8a8a8a" stroke-width="1"/></svg>
<div class="a" style="left:364px;top:73px;width:8px;height:3px;border:1px solid #777;background:#eee"></div>
<div class="a" style="left:383px;top:73.5px;width:9px;height:8.5px;border:1px solid #777;border-top:2px solid #777;background:#f6f6f6"></div>
<svg class="a" style="left:375px;top:112px" width="9" height="6"><path d="M0.5 1L2.5 5L4.5 1" stroke="#3a4a78" stroke-width="1.1" fill="none"/><path d="M5.5 3.5H8.5M7 2V5" stroke="#c07030" stroke-width="1"/></svg>
<svg class="a" style="left:385px;top:92px" width="10" height="7"><path d="M1 1H9L5 5.5Z" fill="#d8d8d8" stroke="#8a8a8a" stroke-width="1.2"/></svg>
<div class="a" style="left:4px;top:409px;width:398px;height:163px;background:#fff;border-radius:4px"></div>
<div class="a" style="left:4px;top:409px;width:398px;height:20px;background:#f1f4f8;border-radius:4px 4px 0 0"></div>
<div class="a" style="left:8px;top:414px;width:7px;height:12px;background:#f4f4f4;border:1px solid #c8c8c8"></div>
<div class="a" style="left:9px;top:415px;width:3px;height:3px;background:#e04040;border-radius:50%"></div>
<div class="a" style="left:8px;top:422px;width:4px;height:4px;background:#e0c040;border-radius:50%"></div>
<div class="tx" style="left:22px;top:414.00px;color:#888;font-size:9.5px;"><b style="width:17.60px"><i style="transform:scaleX(0.978)">問題</i></b></div>
<div class="a" style="left:44px;top:414px;width:10px;height:9px;border:1.5px solid #5b8fd0;background:#eaf2fb"></div>
<div class="tx" style="left:56px;top:414.00px;color:#888;font-size:9.5px;"><b style="width:34.00px"><i style="transform:scaleX(0.756)">コンソール</i></b></div>
<div class="a" style="left:382px;top:416px;width:9px;height:8.5px;border:1px solid #777;border-top:2px solid #777;background:#f6f6f6"></div>
<svg class="a" style="left:12px;top:436px" width="6" height="8"><path d="M1 1L4 4L1 7" stroke="#777" stroke-width="1.3" fill="none"/></svg>
<div class="a" style="left:23px;top:432px;width:52px;height:15px;background:#e4e4e4"></div>
<div class="a" style="left:25px;top:436px;width:14px;height:5px;background:linear-gradient(#707070,#a0a0a0);border-radius:2px"></div>
<div class="a" style="left:34px;top:440px;width:6px;height:6px;background:#3a7ad0;border-radius:1px"></div>
<div class="tx" style="left:43px;top:434.00px;color:#333;font-size:9px;">GlassFish</div>
<div class="a" style="left:406px;top:67px;width:616px;height:505px;background:#fff;border-radius:4px"></div>
<div class="a" style="left:406px;top:67px;width:616px;height:21px;background:#f3f5f9;border-radius:4px 4px 0 0"></div>
<div class="a" style="left:985px;top:73px;width:8px;height:3px;border:1px solid #777;background:#eee"></div>
<div class="a" style="left:1003px;top:73.5px;width:9px;height:8.5px;border:1px solid #777;border-top:2px solid #777;background:#f6f6f6"></div>
<div class="a" style="left:1px;top:573px;width:1023px;height:22px;background:#dfe5f0"></div>
<div class="a" style="left:1px;top:595px;width:1023px;height:1px;background:#f4f6fa"></div>
<div class="tx" style="left:4px;top:578.00px;color:#333;font-size:9px;transform:scaleX(0.985);transform-origin:0 50%;">demoJsf</div>
<div class="a" style="left:300px;top:577px;width:210px;height:16px;background:#fff;border:1px solid #b8bec8"></div>
<svg class="a" style="left:501px;top:583px" width="8" height="6"><path d="M1 1L4 4L7 1" stroke="#777" stroke-width="1.3" fill="none"/></svg>
<svg class="a" style="left:518px;top:578px" width="10" height="12"><path d="M3 1H7V6H9.5L5 11L0.5 6H3Z" fill="#f2c236" stroke="#c48f22" stroke-width="0.8"/></svg>
<svg class="a" style="left:536px;top:578px" width="10" height="12"><path d="M3 11H7V6H9.5L5 1L0.5 6H3Z" fill="#f2c236" stroke="#c48f22" stroke-width="0.8"/></svg>
<svg class="a" style="left:574px;top:582px" width="8" height="5"><path d="M0 0H8L4 5Z" fill="#2d62a8"/></svg>
<svg class="a" style="left:590px;top:579px" width="11" height="11"><path d="M1.5 1.5L9.5 9.5M9.5 1.5L1.5 9.5" stroke="#e03838" stroke-width="2.6"/></svg>
<div class="a" style="left:607px;top:577px;width:1px;height:15px;background:#a8b0bc"></div>
<div class="tx" style="left:613px;top:579.00px;color:#333;font-size:9.5px;"><b style="width:32.40px"><i style="transform:scaleX(0.900)">一致なし</i></b></div>
<div class="a" style="left:671px;top:577px;width:1px;height:15px;background:repeating-linear-gradient(#9aa3b0 0 1px,transparent 1px 3px)"></div>
<div class="a" style="left:895px;top:577px;width:1px;height:15px;background:repeating-linear-gradient(#9aa3b0 0 1px,transparent 1px 3px)"></div>
<div class="tx" style="left:904px;top:579.00px;color:#333;font-size:9px;transform:scaleX(0.961);transform-origin:0 50%;">UTF-8</div>
<div class="a" style="left:985px;top:576px;width:1px;height:16px;background:#a8b0bc"></div>
<div class="tx" style="left:992px;top:579.00px;color:#333;font-size:9px;transform:scaleX(0.872);transform-origin:0 50%;">CRLF</div>
<div class="a" style="left:74px;top:100px;width:302px;height:687px;background:rgba(0,0,0,0.42)"></div>
<div class="a" style="left:72px;top:95px;width:302px;height:686px;background:#f0f0f0;border:1px solid #d4d4d4"></div>
<div class="tx" style="left:101px;top:99.70px;color:#111;font-size:9.5px;"><b style="width:17.60px"><i style="transform:scaleX(0.978)">新規</i></b>(W)</div>
<svg class="a" style="left:361px;top:101.70px" width="6" height="8"><path d="M1.2 1L4.4 4L1.2 7" stroke="#505050" stroke-width="1.7" fill="none"/></svg>
<div class="tx" style="left:101px;top:116.86px;color:#111;font-size:9.5px;"><b style="width:41.70px"><i style="transform:scaleX(0.772)">中にジャンプ</i></b>(I)</div>
<div class="sep" style="top:134.44px"></div>
<div class="tx" style="left:101px;top:139.82px;color:#111;font-size:9.5px;"><b style="width:73.50px"><i style="transform:scaleX(0.817)">新規ウィンドウで開く</i></b>(N)</div>
<div class="tx" style="left:101px;top:156.98px;color:#111;font-size:9.5px;"><b style="width:50.00px"><i style="transform:scaleX(0.926)">型階層を開く</i></b>(N)</div>
<div class="tx" style="right:667px;top:156.98px;color:#111;font-size:9.5px;">F4</div>
<div class="tx" style="left:101px;top:174.14px;color:#111;font-size:9.5px;"><b style="width:17.60px"><i style="transform:scaleX(0.978)">表示</i></b></div>
<div class="tx" style="right:667px;top:174.14px;color:#111;font-size:9.5px;">Alt+Shift+W(<u>W</u>)</div>
<svg class="a" style="left:361px;top:176.14px" width="6" height="8"><path d="M1.2 1L4.4 4L1.2 7" stroke="#505050" stroke-width="1.7" fill="none"/></svg>
<div class="tx" style="left:101px;top:191.30px;color:#111;font-size:9.5px;"><b style="width:90.70px"><i style="transform:scaleX(0.775)">ローカル・ターミナルに表示</i></b></div>
<svg class="a" style="left:361px;top:193.30px" width="6" height="8"><path d="M1.2 1L4.4 4L1.2 7" stroke="#505050" stroke-width="1.7" fill="none"/></svg>
<div class="sep" style="top:208.88px"></div>
<div class="tx" style="left:101px;top:214.26px;color:#111;font-size:9.5px;"><b style="width:20.40px"><i style="transform:scaleX(0.756)">コピー</i></b>(C)</div>
<div class="tx" style="right:667px;top:214.26px;color:#111;font-size:9.5px;">Ctrl+C</div>
<svg class="a" style="left:78px;top:214.06px" width="12" height="13" viewBox="0 0 12 13"><rect x="3" y="0.5" width="8" height="10" fill="#eef2f6" stroke="#b8c4d0"/><rect x="0.5" y="2.5" width="8" height="10" fill="#dde6ee" stroke="#9eb0c2"/><path d="M2.5 6H6.5M2.5 8H6.5M2.5 10H5.5" stroke="#7a9ab8" stroke-width="0.8"/><path d="M9 0.5H11L11 2.5Z" fill="#e8c060"/></svg>
<div class="tx" style="left:101px;top:231.42px;color:#111;font-size:9.5px;"><b style="width:54.20px"><i style="transform:scaleX(0.860)">修飾名のコピー</i></b>(Y)</div>
<svg class="a" style="left:78px;top:231.22px" width="13" height="13" viewBox="0 0 13 13"><rect x="3" y="0.5" width="9" height="10" fill="#eef2f6" stroke="#b8c4d0"/><rect x="0.5" y="2.5" width="9" height="10" fill="#dde6ee" stroke="#9eb0c2"/><circle cx="4" cy="8" r="2.2" fill="#5a88c8"/><circle cx="8" cy="9" r="2" fill="#6a9ad0"/><path d="M10 0.5H12V2.5Z" fill="#e8c060"/></svg>
<div class="tx" style="left:101px;top:248.58px;color:#111;font-size:9.5px;"><b style="width:32.40px"><i style="transform:scaleX(0.900)">貼り付け</i></b>(P)</div>
<div class="tx" style="right:667px;top:248.58px;color:#111;font-size:9.5px;">Ctrl+V</div>
<svg class="a" style="left:79px;top:248.38px" width="11" height="13" viewBox="0 0 11 13"><rect x="0.5" y="1.5" width="9" height="11" fill="#e2b860" stroke="#b88a3a"/><rect x="3" y="0.5" width="4" height="2.5" fill="#3a5a90"/><rect x="4" y="5" width="6" height="7.5" fill="#e8f0f8" stroke="#9ab0c8" stroke-width="0.6"/></svg>
<div class="tx" style="left:101px;top:265.74px;color:#111;font-size:9.5px;"><b style="width:17.60px"><i style="transform:scaleX(0.978)">削除</i></b>(D)</div>
<div class="tx" style="right:667px;top:265.74px;color:#111;font-size:9.5px;">Delete</div>
<svg class="a" style="left:79px;top:266.54px" width="11" height="11" viewBox="0 0 11 11"><path d="M1.5 1.5L9.5 9.5M9.5 1.5L1.5 9.5" stroke="#e02c34" stroke-width="2.8"/></svg>
<div class="sep" style="top:283.32px"></div>
<div class="tx" style="left:101px;top:288.70px;color:#8d8d8d;font-size:9.5px;"><b style="width:73.20px"><i style="transform:scaleX(0.813)">コンテキストから除去</i></b></div>
<div class="tx" style="right:667px;top:288.70px;color:#8d8d8d;font-size:9.5px;">Ctrl+Alt+Shift+Down</div>
<svg class="a" style="left:79px;top:290.00px" width="11" height="10" viewBox="0 0 11 10"><path d="M1 9H10M3 9L5.5 3L8 9" stroke="#c8c8c8" stroke-width="1" fill="none"/></svg>
<div class="tx" style="left:101px;top:305.86px;color:#111;font-size:9.5px;"><b style="width:38.50px"><i style="transform:scaleX(0.713)">ビルド・パス</i></b>(B)</div>
<svg class="a" style="left:361px;top:307.86px" width="6" height="8"><path d="M1.2 1L4.4 4L1.2 7" stroke="#505050" stroke-width="1.7" fill="none"/></svg>
<div class="tx" style="left:101px;top:323.02px;color:#111;font-size:9.5px;"><b style="width:20.40px"><i style="transform:scaleX(0.756)">ソース</i></b>(S)</div>
<div class="tx" style="right:667px;top:323.02px;color:#111;font-size:9.5px;">Alt+Shift+S</div>
<svg class="a" style="left:361px;top:325.02px" width="6" height="8"><path d="M1.2 1L4.4 4L1.2 7" stroke="#505050" stroke-width="1.7" fill="none"/></svg>
<div class="tx" style="left:101px;top:340.18px;color:#111;font-size:9.5px;"><b style="width:52.70px"><i style="transform:scaleX(0.732)">リファクタリング</i></b>(T)</div>
<div class="tx" style="right:667px;top:340.18px;color:#111;font-size:9.5px;">Alt+Shift+T</div>
<svg class="a" style="left:361px;top:342.18px" width="6" height="8"><path d="M1.2 1L4.4 4L1.2 7" stroke="#505050" stroke-width="1.7" fill="none"/></svg>
<div class="sep" style="top:357.76px"></div>
<div class="tx" style="left:101px;top:363.14px;color:#111;font-size:9.5px;"><b style="width:34.00px"><i style="transform:scaleX(0.756)">インポート</i></b>(I)...</div>
<svg class="a" style="left:77px;top:362.44px" width="14" height="13" viewBox="0 0 14 13"><path d="M1.5 5V11.5H12.5V5" stroke="#8aa2d8" stroke-width="2.2" fill="#fff"/><path d="M3 1L7 6" stroke="#8ab4c8" stroke-width="1.5"/><path d="M7.5 4.5L8 7.5L5 7Z" fill="#3a5a88"/></svg>
<div class="tx" style="left:101px;top:380.30px;color:#111;font-size:9.5px;"><b style="width:40.80px"><i style="transform:scaleX(0.756)">エクスポート</i></b>(O)...</div>
<svg class="a" style="left:77px;top:379.60px" width="14" height="13" viewBox="0 0 14 13"><path d="M1.5 5V11.5H12.5V5" stroke="#8aa2d8" stroke-width="2.2" fill="#fff"/><circle cx="3" cy="3" r="1.8" fill="#2a3a58"/><path d="M4 4L8 8" stroke="#8ab4c8" stroke-width="1.5"/></svg>
<div class="sep" style="top:397.88px"></div>
<div class="tx" style="left:101px;top:403.26px;color:#111;font-size:9.5px;"><b style="width:38.60px"><i style="transform:scaleX(0.858)">バグを検索</i></b></div>
<svg class="a" style="left:361px;top:405.26px" width="6" height="8"><path d="M1.2 1L4.4 4L1.2 7" stroke="#505050" stroke-width="1.7" fill="none"/></svg>
<div class="tx" style="left:101px;top:420.42px;color:#111;font-size:9.5px;"><b style="width:37.40px"><i style="transform:scaleX(0.693)">リフレッシュ</i></b>(F)</div>
<div class="tx" style="right:667px;top:420.42px;color:#111;font-size:9.5px;">F5</div>
<svg class="a" style="left:78px;top:420.22px" width="13" height="13" viewBox="0 0 13 13"><path d="M2.5 7.5A4.5 4.5 0 0 1 9.5 3.5" stroke="#e8a828" stroke-width="2.4" fill="none"/><path d="M10.5 5.5A4.5 4.5 0 0 1 3.5 9.5" stroke="#e8a828" stroke-width="2.4" fill="none"/><path d="M8 1L12 3.5L8.5 6Z" fill="#e8b030"/><path d="M5 12L1 9.5L4.5 7Z" fill="#e8b030"/></svg>
<div class="tx" style="left:101px;top:437.58px;color:#111;font-size:9.5px;"><b style="width:70.10px"><i style="transform:scaleX(0.779)">プロジェクトを閉じる</i></b>(S)</div>
<div class="tx" style="left:101px;top:454.74px;color:#111;font-size:9.5px;"><b style="width:103.90px"><i style="transform:scaleX(0.825)">無関係なプロジェクトを閉じる</i></b>(U)</div>
<div class="tx" style="left:101px;top:471.90px;color:#111;font-size:9.5px;"><b style="width:97.00px"><i style="transform:scaleX(0.770)">ワーキング・セットの割り当て</i></b>(A)...</div>
<div class="sep" style="top:489.48px"></div>
<div class="tx" style="left:101px;top:494.86px;color:#111;font-size:9.5px;"><b style="width:17.60px"><i style="transform:scaleX(0.978)">比較</i></b>(A)</div>
<svg class="a" style="left:361px;top:496.86px" width="6" height="8"><path d="M1.2 1L4.4 4L1.2 7" stroke="#505050" stroke-width="1.7" fill="none"/></svg>
<div class="tx" style="left:101px;top:512.02px;color:#111;font-size:9.5px;"><b style="width:17.60px"><i style="transform:scaleX(0.978)">置換</i></b>(L)</div>
<svg class="a" style="left:361px;top:514.02px" width="6" height="8"><path d="M1.2 1L4.4 4L1.2 7" stroke="#505050" stroke-width="1.7" fill="none"/></svg>
<div class="tx" style="left:101px;top:529.18px;color:#111;font-size:9.5px;"><b style="width:105.50px"><i style="transform:scaleX(0.781)">ローカル・ヒストリーからの復元</i></b>(Y)...</div>
<div class="sep" style="top:546.76px"></div>
<div class="tx" style="left:101px;top:552.14px;color:#111;font-size:9.5px;">Windows <b style="width:54.40px"><i style="transform:scaleX(0.756)">エクスプローラー</i></b></div>
<svg class="a" style="left:77px;top:551.44px" width="14" height="14" viewBox="0 0 14 14"><path d="M0.5 1.5H5L6 3H11.5V10H0.5Z" fill="#f2d070" stroke="#d8b048" stroke-width="0.8"/><path d="M0.5 4H11.5V10H0.5Z" fill="#f8e08a"/><circle cx="9" cy="9" r="2.6" fill="#bcd8f0" stroke="#8ab0d8" stroke-width="0.8"/><path d="M10.8 11L13 13" stroke="#c89a30" stroke-width="1.6"/></svg>
<div class="tx" style="left:101px;top:569.30px;color:#111;font-size:9.5px;"><b style="width:65.70px"><i style="transform:scaleX(0.730)">コマンド・プロンプト</i></b></div>
<svg class="a" style="left:78px;top:569.60px" width="12" height="11" viewBox="0 0 12 11"><rect x="0" y="0" width="12" height="11" fill="#1c2634"/><rect x="0" y="0" width="12" height="2" fill="#4a78b8"/><rect x="2" y="4" width="2.5" height="2.5" fill="#c8c8c8"/><path d="M5.5 5H10M2 8.5H10" stroke="#606a78" stroke-width="0.8"/></svg>
<div class="tx" style="left:101px;top:586.46px;color:#111;font-size:9.5px;"><b style="width:17.60px"><i style="transform:scaleX(0.978)">実行</i></b>(R)</div>
<svg class="a" style="left:361px;top:588.46px" width="6" height="8"><path d="M1.2 1L4.4 4L1.2 7" stroke="#505050" stroke-width="1.7" fill="none"/></svg>
<div class="tx" style="left:101px;top:603.62px;color:#111;font-size:9.5px;"><b style="width:25.50px"><i style="transform:scaleX(0.708)">デバッグ</i></b>(D)</div>
<svg class="a" style="left:361px;top:605.62px" width="6" height="8"><path d="M1.2 1L4.4 4L1.2 7" stroke="#505050" stroke-width="1.7" fill="none"/></svg>
<div class="tx" style="left:101px;top:620.78px;color:#111;font-size:9.5px;"><b style="width:39.10px"><i style="transform:scaleX(0.724)">プロファイル</i></b>(P)</div>
<svg class="a" style="left:361px;top:622.78px" width="6" height="8"><path d="M1.2 1L4.4 4L1.2 7" stroke="#505050" stroke-width="1.7" fill="none"/></svg>
<div class="tx" style="left:101px;top:637.94px;color:#111;font-size:9.5px;"><b style="width:17.60px"><i style="transform:scaleX(0.978)">検証</i></b>(V)</div>
<div class="tx" style="left:101px;top:655.10px;color:#111;font-size:9.5px;">Quick JUnit(Q)</div>
<svg class="a" style="left:361px;top:657.10px" width="6" height="8"><path d="M1.2 1L4.4 4L1.2 7" stroke="#505050" stroke-width="1.7" fill="none"/></svg>
<div class="tx" style="left:101px;top:672.26px;color:#111;font-size:9.5px;">Checkstyle</div>
<svg class="a" style="left:361px;top:674.26px" width="6" height="8"><path d="M1.2 1L4.4 4L1.2 7" stroke="#505050" stroke-width="1.7" fill="none"/></svg>
<div class="tx" style="left:101px;top:689.42px;color:#111;font-size:9.5px;"><b style="width:52.70px"><i style="transform:scaleX(0.732)">ステップカウンタ</i></b></div>
<svg class="a" style="left:361px;top:691.42px" width="6" height="8"><path d="M1.2 1L4.4 4L1.2 7" stroke="#505050" stroke-width="1.7" fill="none"/></svg>
<div class="tx" style="left:101px;top:706.58px;color:#111;font-size:9.5px;">Java EE <b style="width:20.40px"><i style="transform:scaleX(0.756)">ツール</i></b></div>
<svg class="a" style="left:361px;top:708.58px" width="6" height="8"><path d="M1.2 1L4.4 4L1.2 7" stroke="#505050" stroke-width="1.7" fill="none"/></svg>
<div class="tx" style="left:101px;top:723.74px;color:#111;font-size:9.5px;"><b style="width:20.40px"><i style="transform:scaleX(0.756)">チーム</i></b>(E)</div>
<svg class="a" style="left:361px;top:725.74px" width="6" height="8"><path d="M1.2 1L4.4 4L1.2 7" stroke="#505050" stroke-width="1.7" fill="none"/></svg>
<div class="a" style="left:76px;top:739.00px;width:296px;height:17.4px;background:#91c9f7"></div>
<div class="tx" style="left:101px;top:740.90px;color:#111;font-size:9.5px;"><b style="width:17.60px"><i style="transform:scaleX(0.978)">構成</i></b></div>
<svg class="a" style="left:361px;top:742.90px" width="6" height="8"><path d="M1.2 1L4.4 4L1.2 7" stroke="#505050" stroke-width="1.7" fill="none"/></svg>
<div class="sep" style="top:758.48px"></div>
<div class="tx" style="left:101px;top:763.86px;color:#111;font-size:9.5px;"><b style="width:39.10px"><i style="transform:scaleX(0.724)">プロパティー</i></b>(R)</div>
<div class="tx" style="right:667px;top:763.86px;color:#111;font-size:9.5px;">Alt+Enter</div>
<div class="a" style="left:79.5px;top:738.6px;width:293px;height:20.5px;border:2.4px solid #e8141c;border-radius:1px"></div>
<div class="a" style="left:19px;top:119px;width:58px;height:19px;border:2px solid #e8141c"></div>
<div class="a" style="left:373px;top:670px;width:265px;height:89px;background:rgba(0,0,0,0.15)"></div>
<div class="a" style="left:372px;top:668px;width:265px;height:89px;background:#f0f0f0;border:1px solid #cfcfcf"></div>
<div class="a" style="left:373px;top:669.5px;width:263px;height:17.5px;background:#91c9f7"></div>
<div class="tx" style="left:397px;top:672.10px;color:#111;font-size:9.5px;">JPA <b style="width:64.10px"><i style="transform:scaleX(0.791)">プロジェクトへ変換</i></b>...</div>
<div class="tx" style="left:397px;top:689.40px;color:#111;font-size:9.5px;">Gradle <b style="width:57.30px"><i style="transform:scaleX(0.796)">ネーチャーの追加</i></b></div>
<div class="tx" style="left:397px;top:706.60px;color:#111;font-size:9.5px;">Cloud Foundry <b style="width:132.30px"><i style="transform:scaleX(0.817)">アプリケーションとして使用可能にする</i></b></div>
<div class="tx" style="left:397px;top:723.70px;color:#111;font-size:9.5px;"><b style="width:102.60px"><i style="transform:scaleX(0.760)">プラグイン・プロジェクトへ変換</i></b>...</div>
<div class="tx" style="left:397px;top:740.80px;color:#111;font-size:9.5px;">Maven <b style="width:64.10px"><i style="transform:scaleX(0.791)">プロジェクトへ変換</i></b></div>
<div class="tx" style="left:376px;top:690.00px;color:#3cc03c;font-size:12px;font-weight:bold;">G</div>
<div class="a" style="left:377.3px;top:669px;width:256px;height:20.5px;border:2.4px solid #e8141c;border-radius:1px"></div>
</div></body></html>
